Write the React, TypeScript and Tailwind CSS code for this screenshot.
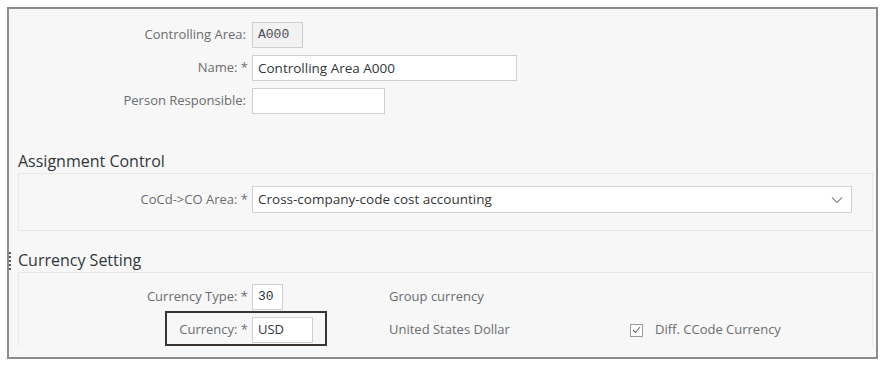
import React from 'react';

const font = { fontFamily: '"Open Sans", "Liberation Sans", sans-serif' };

function Label({ text, required, width }: { text: string; required?: boolean; width: string }) {
  return (
    <div className={`${width} shrink-0 text-right text-[13px] text-[#6a6d70] pr-[4px]`}>
      {text}
      {required ? <span> *</span> : <span className="inline-block w-[2px]" />}
    </div>
  );
}

export default function App() {
  return (
    <div className="w-[885px] h-[367px] bg-white pt-[7px] pl-[7px]" style={font}>
      <div className="relative w-[871px] h-[352px] border-2 border-[#8c8c8c] bg-[#f7f7f7] overflow-hidden">
        {/* Header fields */}
        <div className="pt-[13px] flex flex-col gap-[7px]">
          <div className="flex items-center">
            <Label text="Controlling Area:" width="w-[243px]" />
            <div className="h-[26px] w-[51px] border border-[#cfcfcf] bg-[#f2f2f2] flex items-center px-[5px] text-[13px] text-[#4a4d50] font-['Liberation_Mono',monospace]">
              A000
            </div>
          </div>
          <div className="flex items-center">
            <Label text="Name:" required width="w-[243px]" />
            <div className="h-[26px] w-[265px] border border-[#cfcfcf] bg-white flex items-center px-[5px] text-[13.5px] text-[#32363a]">
              Controlling Area A000
            </div>
          </div>
          <div className="flex items-center">
            <Label text="Person Responsible:" width="w-[243px]" />
            <div className="h-[26px] w-[133px] border border-[#cfcfcf] bg-white" />
          </div>
        </div>

        {/* Assignment Control */}
        <div className="mt-[36px] pl-[9px] pr-[3px]">
          <div className="h-[22px] leading-[22px] text-[16px] text-[#32363a]">Assignment Control</div>
          <div className="mt-[1px] border border-[#e8e8e8] pt-[12px] pb-[17px]">
            <div className="flex items-center">
              <Label text="CoCd->CO Area:" required width="w-[233px]" />
              <div className="h-[27px] w-[600px] border border-[#cfcfcf] bg-white flex items-center justify-between pl-[5px] pr-[8px] text-[13.5px] text-[#32363a]">
                <span>Cross-company-code cost accounting</span>
                <svg width="12" height="8" viewBox="0 0 12 8" fill="none">
                  <path d="M1 1.5 L6 6.5 L11 1.5" stroke="#8a8d90" strokeWidth="1.1" />
                </svg>
              </div>
            </div>
          </div>
        </div>

        {/* Currency Setting */}
        <div className="relative mt-[18px] pl-[9px] pr-[3px]">
          <div className="absolute left-[0px] top-[3px] flex flex-col gap-[2px]">
            {[0, 1, 2, 3, 4].map((i) => (
              <div key={i} className="w-[2px] h-[2px] bg-[#555]" />
            ))}
          </div>
          <div className="h-[22px] leading-[22px] text-[16px] text-[#32363a]">Currency Setting</div>
          <div className="mt-[1px] h-[74px] border border-b-0 border-[#e8e8e8] pt-[11px] flex flex-col gap-[7px]">
            <div className="flex items-center">
              <Label text="Currency Type:" required width="w-[233px]" />
              <div className="h-[26px] w-[31px] border border-[#cfcfcf] bg-white flex items-center px-[5px] text-[13px] text-[#32363a] font-['Liberation_Mono',monospace]">
                30
              </div>
              <div className="ml-[106px] text-[13px] text-[#6a6d70]">Group currency</div>
            </div>
            <div className="flex items-center">
              <Label text="Currency:" required width="w-[233px]" />
              <div className="h-[26px] w-[61px] border border-[#cfcfcf] bg-white flex items-center px-[5px] text-[13px] text-[#32363a]">
                USD
              </div>
              <div className="ml-[76px] w-[241px] text-[13px] text-[#6a6d70]">United States Dollar</div>
              <div className="flex items-center gap-[12px]">
                <div className="w-[13px] h-[13px] border border-[#9a9a9a] bg-white flex items-center justify-center">
                  <svg width="9" height="8" viewBox="0 0 9 8" fill="none">
                    <path d="M1 4 L3.5 6.5 L8 1" stroke="#6a6d70" strokeWidth="1.1" />
                  </svg>
                </div>
                <span className="text-[13px] text-[#6a6d70]">Diff. CCode Currency</span>
              </div>
            </div>
          </div>
        </div>

        {/* Highlight annotation */}
        <div className="absolute left-[156px] top-[302px] w-[162px] h-[35px] border-2 border-[#3a3430]" />
      </div>
    </div>
  );
}
